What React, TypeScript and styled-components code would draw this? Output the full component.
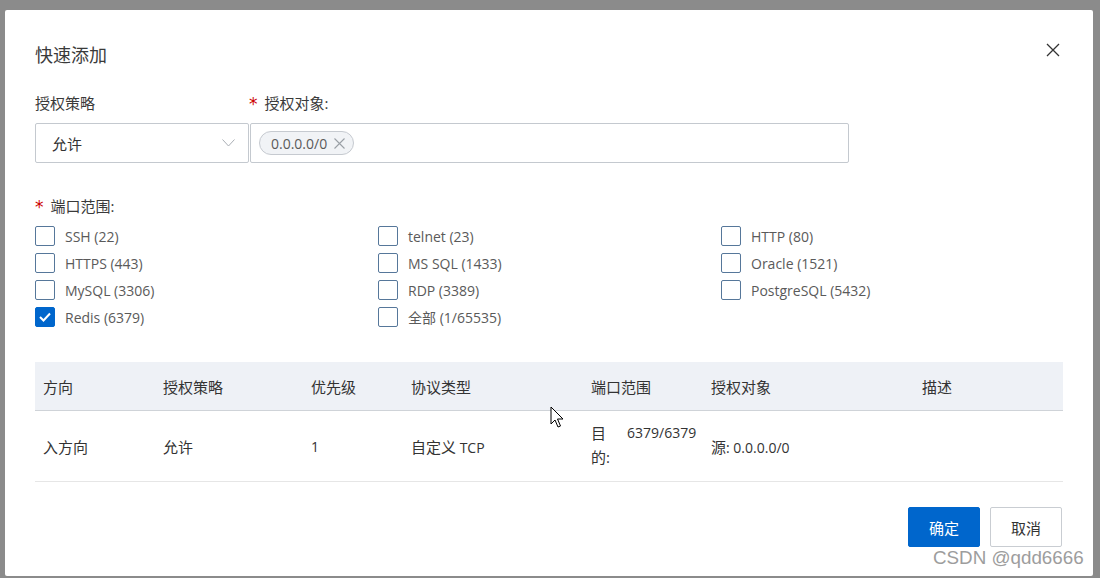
import * as React from 'react';
import styled, {createGlobalStyle} from 'styled-components';

const $BLUE = '#0066cc';
const $TEXT = '#333333';
const $TEXT_GRAY = '#5a5a5a';
const $BORDER = '#c4c9cf';
const $FONT = `"Open Sans", "Noto Sans CJK SC", sans-serif`;

const GlobalStyle = createGlobalStyle`
  * {
    box-sizing: border-box;
  }

  body {
    margin: 0;
    background: #8b8b8b;
    font-family: ${$FONT};
    color: ${$TEXT};
  }
`;

const Page = styled.div`
  position: relative;
  height: 578px;
  padding: 10px 7px 0 5px;
  overflow: hidden;
`;

const Modal = styled.div`
  height: 566px;
  background: #fff;
  border-radius: 2px;
  padding: 33px 30px 0;
`;

const Header = styled.div`
  display: flex;
  align-items: center;
  justify-content: space-between;
  height: 25px;
`;

const Title = styled.h2`
  margin: 0;
  font-size: 18px;
  font-weight: 400;
  line-height: 25px;
  color: #3a3a3a;
`;

const CloseButton = styled.button`
  display: flex;
  align-items: center;
  justify-content: center;
  width: 20px;
  height: 20px;
  margin-top: -11px;
  padding: 0;
  border: 0;
  background: none;
  color: #333;
`;

const FormRow = styled.div`
  display: grid;
  grid-template-columns: 214px 600px;
  margin-top: 24px;
`;

const Field = styled.div`
  display: flex;
  flex-direction: column;
`;

const Label = styled.label`
  display: flex;
  align-items: center;
  height: 20px;
  font-size: 15px;
  color: #3a3a3a;
`;

const Required = styled.span`
  font-family: "DejaVu Sans", sans-serif;
  font-size: 17px;
  color: #cc0000;
  margin-right: 7px;
  line-height: 1;
  position: relative;
  top: 2px;
`;

const Select = styled.div`
  display: flex;
  align-items: center;
  justify-content: space-between;
  height: 40px;
  margin-top: 11px;
  padding: 0 13px 0 16px;
  border: 1px solid ${$BORDER};
  border-radius: 2px;
  font-size: 15px;
  color: ${$TEXT};
`;

const Input = styled.div`
  display: flex;
  align-items: center;
  height: 40px;
  margin-top: 11px;
  margin-left: 1px;
  padding: 0 8px;
  border: 1px solid ${$BORDER};
  border-radius: 2px;
`;

const Tag = styled.span`
  display: inline-flex;
  align-items: center;
  gap: 7px;
  height: 24px;
  padding: 0 8px 0 11px;
  border: 1px solid #c6cad0;
  border-radius: 12px;
  background: #f1f3f6;
  font-size: 14px;
  color: ${$TEXT_GRAY};
`;

const PortLabel = styled(Label)`
  margin-top: 32px;
`;

const CheckGrid = styled.div`
  display: grid;
  grid-template-columns: 343px 343px auto;
  row-gap: 7px;
  margin-top: 11px;
`;

const CheckItem = styled.label`
  display: flex;
  align-items: center;
  height: 20px;
  font-size: 14px;
  color: ${$TEXT_GRAY};
`;

const Box = styled.span<{checked?: boolean}>`
  display: flex;
  align-items: center;
  justify-content: center;
  width: 20px;
  height: 20px;
  margin-right: 10px;
  border: 1px solid #56779a;
  border-radius: 2px;
  background: #fff;

  ${({checked}) => checked && `
    border-color: ${$BLUE};
    background: ${$BLUE};
  `}
`;

const Cn = styled.span`
  font-size: 15px;
`;

const Table = styled.div`
  margin-top: 35px;
`;

const TableRow = styled.div<{head?: boolean}>`
  display: grid;
  grid-template-columns: 120px 148px 100px 180px 120px 211px 149px;
  align-items: center;
  height: ${({head}) => head ? '49px' : '71px'};
  border-bottom: 1px solid ${({head}) => head ? '#cfd3d8' : '#e6e6e6'};
  background: ${({head}) => head ? '#eef1f6' : '#fff'};
  font-size: ${({head}) => head ? '15px' : '14px'};
  color: ${$TEXT};
`;

const Cell = styled.div`
  padding: 0 8px;
`;

const PortCell = styled(Cell)`
  display: flex;
  align-items: flex-start;
  line-height: 24px;
  margin-top: -2px;
`;

const PortKey = styled.span`
  flex: 0 0 30px;
  margin-right: 6px;
  font-size: 15px;
`;

const Footer = styled.div`
  display: flex;
  justify-content: flex-end;
  gap: 10px;
  margin-top: 25px;
  padding-right: 1px;
`;

const Button = styled.button<{primary?: boolean}>`
  width: 72px;
  height: 40px;
  border: 1px solid ${({primary}) => primary ? $BLUE : '#c9cdd2'};
  border-radius: 2px;
  background: ${({primary}) => primary ? $BLUE : '#fff'};
  color: ${({primary}) => primary ? '#fff' : $TEXT};
  font-family: ${$FONT};
  font-size: 15px;
`;

const Watermark = styled.div`
  position: absolute;
  left: 933px;
  top: 547px;
  font-family: "Liberation Sans", Arial, sans-serif;
  font-size: 18.8px;
  color: #9d9d9d;
  text-shadow: 0 0 2px #fff;
  white-space: nowrap;
`;

const Cursor = styled.svg`
  position: absolute;
  left: 550px;
  top: 406px;
`;

const PORTS = [
  {name: 'SSH (22)'},
  {name: 'telnet (23)'},
  {name: 'HTTP (80)'},
  {name: 'HTTPS (443)'},
  {name: 'MS SQL (1433)'},
  {name: 'Oracle (1521)'},
  {name: 'MySQL (3306)'},
  {name: 'RDP (3389)'},
  {name: 'PostgreSQL (5432)'},
  {name: 'Redis (6379)', checked: true},
  {name: '全部 (1/65535)'}
];

const HEADS = ['方向', '授权策略', '优先级', '协议类型', '端口范围', '授权对象', '描述'];

const App = () => (
  <Page>
    <GlobalStyle />
    <Modal>
      <Header>
        <Title>快速添加</Title>
        <CloseButton>
          <svg width="14" height="14" viewBox="0 0 14 14">
            <path d="M1 1L13 13M13 1L1 13" stroke="currentColor" strokeWidth="1.3" />
          </svg>
        </CloseButton>
      </Header>

      <FormRow>
        <Field>
          <Label>授权策略</Label>
          <Select>
            允许
            <svg width="13" height="8" viewBox="0 0 13 8">
              <path d="M0.5 0.5L6.5 7L12.5 0.5" fill="none" stroke="#a9aeb4" strokeWidth="1" />
            </svg>
          </Select>
        </Field>
        <Field>
          <Label><Required>*</Required>授权对象:</Label>
          <Input>
            <Tag>
              0.0.0.0/0
              <svg width="11" height="11" viewBox="0 0 11 11">
                <path d="M0.5 0.5L10.5 10.5M10.5 0.5L0.5 10.5" stroke="#9aa0a6" strokeWidth="1.1" />
              </svg>
            </Tag>
          </Input>
        </Field>
      </FormRow>

      <PortLabel><Required>*</Required>端口范围:</PortLabel>
      <CheckGrid>
        {PORTS.map(({name, checked}) => (
          <CheckItem key={name}>
            <Box checked={checked}>
              {checked && (
                <svg width="12" height="10" viewBox="0 0 12 10">
                  <path d="M1 5L4.5 8.5L11 1.5" fill="none" stroke="#fff" strokeWidth="2" />
                </svg>
              )}
            </Box>
            {name}
          </CheckItem>
        ))}
      </CheckGrid>

      <Table>
        <TableRow head>
          {HEADS.map(h => <Cell key={h}>{h}</Cell>)}
        </TableRow>
        <TableRow>
          <Cell><Cn>入方向</Cn></Cell>
          <Cell><Cn>允许</Cn></Cell>
          <Cell>1</Cell>
          <Cell><Cn>自定义</Cn> TCP</Cell>
          <PortCell>
            <PortKey>目的:</PortKey>
            <span>6379/6379</span>
          </PortCell>
          <Cell><Cn>源</Cn>: 0.0.0.0/0</Cell>
          <Cell />
        </TableRow>
      </Table>

      <Footer>
        <Button primary>确定</Button>
        <Button>取消</Button>
      </Footer>
    </Modal>

    <Cursor width="14" height="24" viewBox="0 0 14 24">
      <path d="M1 1V18L5 14L8 21L10.5 20L7.5 13H13Z" fill="#fff" stroke="#000" strokeWidth="1" strokeLinejoin="round" />
    </Cursor>
    <Watermark>CSDN @qdd6666</Watermark>
  </Page>
);

export default App;
